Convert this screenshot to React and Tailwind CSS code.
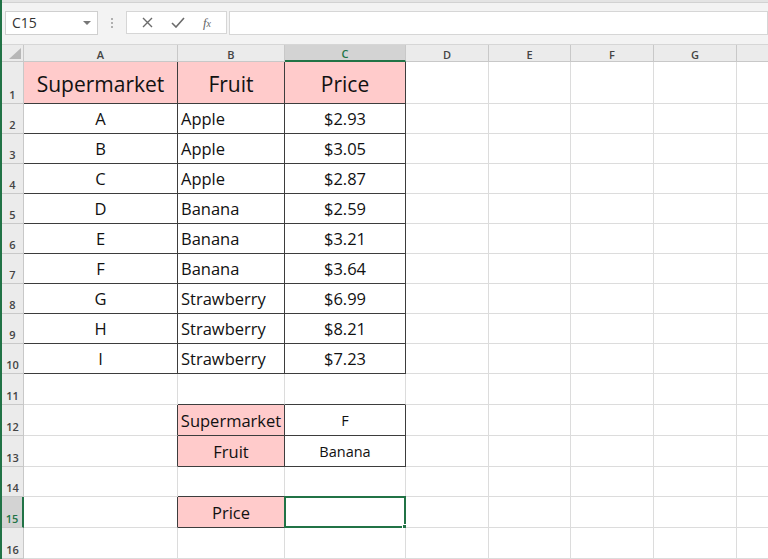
import React from "react";

const COLS = "grid grid-cols-[22px_154px_107px_121px_83px_82px_83px_83px_83px]";
const LETTERS = ["A", "B", "C", "D", "E", "F", "G", "H"];

// each row: height class, cells keyed by column index (0 = A)
const ROWS = [
  {
    n: 1,
    h: "h-[42px]",
    cells: {
      0: { t: "Supermarket", big: true, pink: true, dr: true, db: true },
      1: { t: "Fruit", big: true, pink: true, dr: true, db: true },
      2: { t: "Price", big: true, pink: true, dr: true, db: true },
    },
  },
  ...[
    ["A", "Apple", "$2.93"],
    ["B", "Apple", "$3.05"],
    ["C", "Apple", "$2.87"],
    ["D", "Banana", "$2.59"],
    ["E", "Banana", "$3.21"],
    ["F", "Banana", "$3.64"],
    ["G", "Strawberry", "$6.99"],
    ["H", "Strawberry", "$8.21"],
    ["I", "Strawberry", "$7.23"],
  ].map(([s, f, p], i) => ({
    n: i + 2,
    h: "h-[30px]",
    cells: {
      0: { t: s, dr: true, db: true },
      1: { t: f, left: true, dr: true, db: true },
      2: { t: p, dr: true, db: true },
    },
  })),
  { n: 11, h: "h-[31px]", cells: { 1: { db: true }, 2: { db: true } } },
  {
    n: 12,
    h: "h-[31px]",
    cells: {
      0: { dr: true },
      1: { t: "Supermarket", pink: true, dr: true, db: true },
      2: { t: "F", small: true, dr: true, db: true },
    },
  },
  {
    n: 13,
    h: "h-[31px]",
    cells: {
      0: { dr: true },
      1: { t: "Fruit", pink: true, dr: true, db: true },
      2: { t: "Banana", small: true, dr: true, db: true },
    },
  },
  { n: 14, h: "h-[30px]", cells: { 1: { db: true } } },
  {
    n: 15,
    h: "h-[31px]",
    sel: true,
    cells: {
      0: { dr: true },
      1: { t: "Price", pink: true, dr: true, db: true },
      2: { active: true },
    },
  },
  { n: 16, h: "h-[31px]", cells: {} },
];

function Cell({ c = {} }) {
  const size = c.big ? "text-[21px] pt-[3px]" : c.small ? "text-[14.5px] pt-[2px]" : "text-[16.5px] pt-[2px]";
  return (
    <div
      className={`relative flex items-center overflow-visible whitespace-nowrap border-r border-b leading-none text-[#111] ${size} ${
        c.left ? "justify-start pl-[3px]" : "justify-center"
      } ${c.pink ? "bg-[#ffcbcb]" : "bg-white"} ${c.dr ? "border-r-[#3d3d3d]" : "border-r-[#dcdcdc]"} ${
        c.db ? "border-b-[#3d3d3d]" : "border-b-[#dcdcdc]"
      }`}
    >
      {c.t}
      {c.active && (
        <div className="absolute -top-[1px] -left-[1px] -right-[1px] -bottom-[1px] border-2 border-[#217346]">
          <div className="absolute -right-[4px] -bottom-[4px] w-[6px] h-[6px] bg-[#217346] border border-white" />
        </div>
      )}
    </div>
  );
}

export default function App() {
  return (
    <div className="w-[768px] h-[559px] overflow-hidden bg-white border-l-2 border-[#217346] flex flex-col font-['Open_Sans',sans-serif]">
      {/* ribbon remnant */}
      <div className="h-[3px] bg-[#e4e4e4] border-b border-[#d2d2d2] shrink-0" />

      {/* formula bar */}
      <div className="h-[41px] shrink-0 bg-[#f3f3f3] flex items-start pt-[8px] pl-[3px] gap-0">
        <div className="w-[93px] h-[24px] bg-white border border-[#cfcfcf] flex items-center justify-between pl-[6px] pr-[6px]">
          <span className="text-[14px] text-[#333] leading-none">C15</span>
          <svg width="8" height="5" viewBox="0 0 8 5">
            <polygon points="0,0 8,0 4,4" fill="#777" />
          </svg>
        </div>
        <div className="w-[28px] h-[24px] flex flex-col items-center justify-center gap-[2px]">
          <span className="w-[2px] h-[2px] bg-[#b0b0b0]" />
          <span className="w-[2px] h-[2px] bg-[#b0b0b0]" />
          <span className="w-[2px] h-[2px] bg-[#b0b0b0]" />
        </div>
        <div className="w-[101px] h-[23px] bg-white border border-[#d6d6d6] flex items-center justify-around px-[6px]">
          <svg width="11" height="11" viewBox="0 0 11 11">
            <path d="M1 1 L10 10 M10 1 L1 10" stroke="#6b6b6b" strokeWidth="1.4" />
          </svg>
          <svg width="14" height="11" viewBox="0 0 14 11">
            <path d="M1 6 L5 10 L13 1" stroke="#6b6b6b" strokeWidth="1.6" fill="none" />
          </svg>
          <span className="text-[13px] italic text-[#666] font-['Liberation_Serif',serif] leading-none">
            f<span className="text-[10px]">x</span>
          </span>
        </div>
        <div className="flex-1 h-[24px] ml-[2px] bg-white border border-[#d6d6d6]" />
      </div>

      {/* column headers */}
      <div className={`${COLS} h-[18px] shrink-0 bg-[#ebebeb] border-t border-[#d6d6d6]`}>
        <div className="border-r border-b border-[#c8c8c8] flex items-end justify-end pr-[2px] pb-[2px]">
          <svg width="12" height="11" viewBox="0 0 12 11">
            <polygon points="12,0 12,11 0,11" fill="#b7b7b7" />
          </svg>
        </div>
        {LETTERS.map((l) =>
          l === "C" ? (
            <div
              key={l}
              className="bg-[#d3d3d3] border-r border-[#c8c8c8] border-b-2 border-b-[#217346] flex items-center justify-center text-[11px] font-semibold text-[#217346] leading-none pt-[1px]"
            >
              {l}
            </div>
          ) : (
            <div
              key={l}
              className="border-r border-b border-[#c8c8c8] flex items-center justify-center text-[11px] font-semibold text-[#444] leading-none pt-[2px]"
            >
              {l === "H" ? "" : l}
            </div>
          )
        )}
      </div>

      {/* rows */}
      {ROWS.map((r) => (
        <div key={r.n} className={`${COLS} ${r.h} shrink-0`}>
          {r.sel ? (
            <div className="bg-[#d3d3d3] border-r-2 border-r-[#217346] border-b border-b-[#c8c8c8] flex items-end justify-center pb-[3px] text-[11px] font-semibold text-[#217346] leading-none">
              {r.n}
            </div>
          ) : (
            <div className="bg-[#ebebeb] border-r border-b border-[#c8c8c8] flex items-end justify-center pb-[3px] text-[11px] font-semibold text-[#444] leading-none">
              {r.n}
            </div>
          )}
          {LETTERS.map((l, i) => (
            <Cell key={l} c={r.cells[i]} />
          ))}
        </div>
      ))}
    </div>
  );
}
